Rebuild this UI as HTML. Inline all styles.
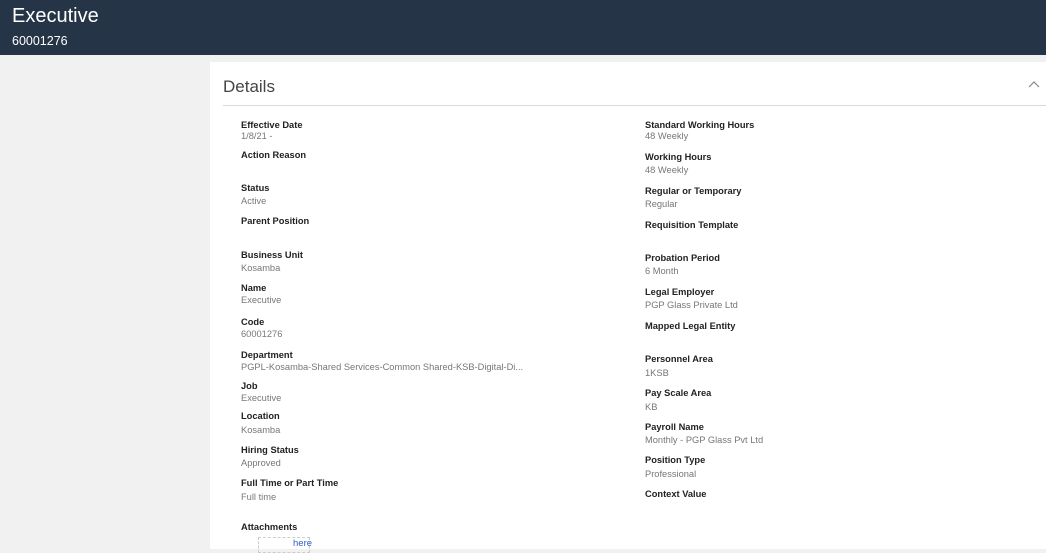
<!DOCTYPE html><html><head><style>
body{margin:0;width:1046px;height:549px;background:#f1f1f1;font-family:"Liberation Sans",sans-serif;position:relative;overflow:hidden}
.hd{position:absolute;left:0;top:0;width:1046px;height:55px;background:#253446;color:#fff}
.card{position:absolute;left:210px;top:62px;width:836px;height:487px;background:#fff}
.w{position:absolute;left:0;top:0;width:1046px;height:549px}
.t{position:absolute;white-space:nowrap;line-height:12px}
.l{font-size:9.3px;font-weight:bold;color:#222}
.v{font-size:9.3px;color:#777}
</style></head><body>
<div class="hd"><div class="t" style="left:12px;top:4px;font-size:20px;line-height:24px">Executive</div><div class="t" style="left:12px;top:34px;font-size:12.5px;line-height:14px">60001276</div></div>
<div class="card"></div>
<div class="t" style="left:223px;top:77px;font-size:17px;line-height:20px;color:#444">Details</div>
<div style="position:absolute;left:223px;top:105px;width:823px;height:1px;background:#d6dbe0"></div>
<svg style="position:absolute;left:1028px;top:80px" width="12" height="8"><path d="M1 7 L6 2 L11 7" fill="none" stroke="#888" stroke-width="1.2"/></svg>
<div class="w">
<div class="t l" style="left:241px;top:119px">Effective Date</div><div class="t v" style="left:241px;top:130px">1/8/21 -</div>
<div class="t l" style="left:241px;top:149px">Action Reason</div>
<div class="t l" style="left:241px;top:182px">Status</div><div class="t v" style="left:241px;top:195px">Active</div>
<div class="t l" style="left:241px;top:215px">Parent Position</div>
<div class="t l" style="left:241px;top:249px">Business Unit</div><div class="t v" style="left:241px;top:262px">Kosamba</div>
<div class="t l" style="left:241px;top:282px">Name</div><div class="t v" style="left:241px;top:294px">Executive</div>
<div class="t l" style="left:241px;top:316px">Code</div><div class="t v" style="left:241px;top:328px">60001276</div>
<div class="t l" style="left:241px;top:349px">Department</div><div class="t v" style="left:241px;top:361px">PGPL-Kosamba-Shared Services-Common Shared-KSB-Digital-Di...</div>
<div class="t l" style="left:241px;top:380px">Job</div><div class="t v" style="left:241px;top:392px">Executive</div>
<div class="t l" style="left:241px;top:410px">Location</div><div class="t v" style="left:241px;top:424px">Kosamba</div>
<div class="t l" style="left:241px;top:444px">Hiring Status</div><div class="t v" style="left:241px;top:457px">Approved</div>
<div class="t l" style="left:241px;top:477px">Full Time or Part Time</div><div class="t v" style="left:241px;top:491px">Full time</div>
<div class="t l" style="left:241px;top:521px">Attachments</div>
<div style="position:absolute;left:258px;top:537px;width:50px;height:14px;border:1px dashed #ccc"></div>
<div class="t" style="left:293px;top:538px;font-size:9.5px;color:#2f5fc9">here</div>
<div class="t l" style="left:645px;top:119px">Standard Working Hours</div><div class="t v" style="left:645px;top:130px">48 Weekly</div>
<div class="t l" style="left:645px;top:151px">Working Hours</div><div class="t v" style="left:645px;top:164px">48 Weekly</div>
<div class="t l" style="left:645px;top:185px">Regular or Temporary</div><div class="t v" style="left:645px;top:198px">Regular</div>
<div class="t l" style="left:645px;top:219px">Requisition Template</div>
<div class="t l" style="left:645px;top:252px">Probation Period</div><div class="t v" style="left:645px;top:265px">6 Month</div>
<div class="t l" style="left:645px;top:286px">Legal Employer</div><div class="t v" style="left:645px;top:299px">PGP Glass Private Ltd</div>
<div class="t l" style="left:645px;top:320px">Mapped Legal Entity</div>
<div class="t l" style="left:645px;top:353px">Personnel Area</div><div class="t v" style="left:645px;top:367px">1KSB</div>
<div class="t l" style="left:645px;top:387px">Pay Scale Area</div><div class="t v" style="left:645px;top:401px">KB</div>
<div class="t l" style="left:645px;top:421px">Payroll Name</div><div class="t v" style="left:645px;top:434px">Monthly - PGP Glass Pvt Ltd</div>
<div class="t l" style="left:645px;top:454px">Position Type</div><div class="t v" style="left:645px;top:468px">Professional</div>
<div class="t l" style="left:645px;top:488px">Context Value</div>
</div>
</body></html>
